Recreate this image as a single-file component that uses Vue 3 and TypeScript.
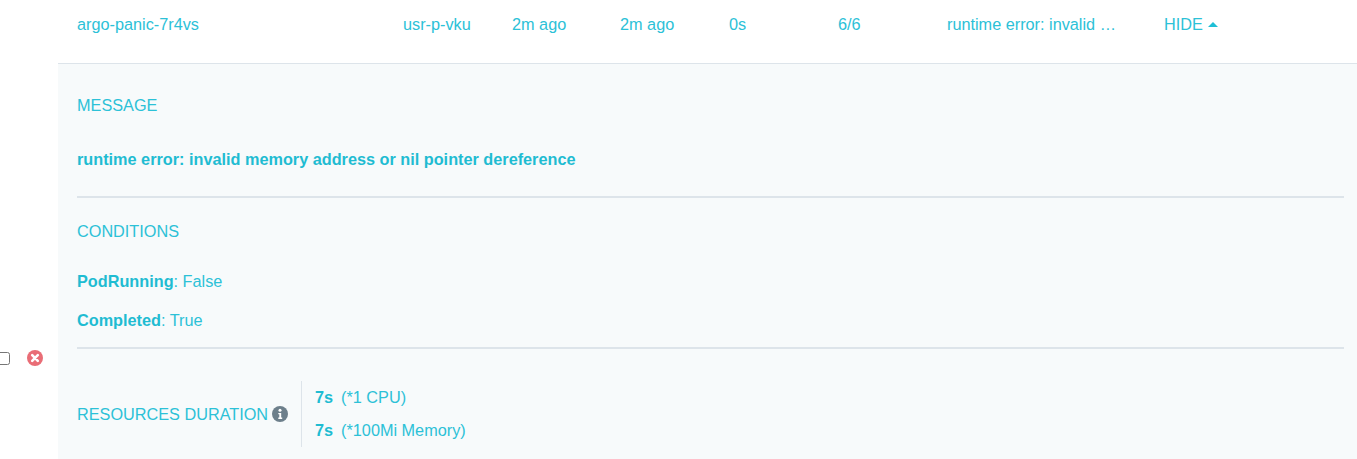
<script setup lang="ts">
const cells = ['usr-p-vku', '2m ago', '2m ago', '0s', '6/6']
const conditions = [
  { name: 'PodRunning', value: 'False' },
  { name: 'Completed', value: 'True' },
]
const durations = [
  { value: '7s', unit: '(*1 CPU)' },
  { value: '7s', unit: '(*100Mi Memory)' },
]
</script>

<template>
  <div class="page">
    <aside class="gutter">
      <span class="checkbox"></span>
      <svg class="status" viewBox="0 0 16 16" width="16" height="16">
        <circle cx="8" cy="8" r="8" fill="#e96d76" />
        <path d="M5.2 5.2l5.6 5.6M10.8 5.2l-5.6 5.6" stroke="#fff" stroke-width="2.6" stroke-linecap="round" />
      </svg>
    </aside>
    <main class="main">
      <div class="row">
        <div class="name">argo-panic-7r4vs</div>
        <div v-for="(cell, i) in cells" :key="i">{{ cell }}</div>
        <div class="ellipsis">runtime error: invalid memory address or nil pointer dereference</div>
        <div class="toggle">HIDE <span class="caret"></span></div>
      </div>
      <div class="details">
        <section class="message">
          <div class="title">MESSAGE</div>
          <div class="strong">runtime error: invalid memory address or nil pointer dereference</div>
        </section>
        <section class="conditions">
          <div class="title">CONDITIONS</div>
          <div v-for="c in conditions" :key="c.name" class="condition">
            <b class="strong">{{ c.name }}</b>: {{ c.value }}
          </div>
        </section>
        <section class="resources">
          <div class="res-label">
            RESOURCES DURATION
            <svg class="info" viewBox="0 0 16 16" width="16" height="16">
              <circle cx="8" cy="8" r="8" fill="#6d7f8b" />
              <circle cx="8" cy="4.3" r="1.5" fill="#fff" />
              <path d="M6.3 7h2.9v4.6h1v1.3H6.3v-1.3h1V8.3h-1z" fill="#fff" />
            </svg>
          </div>
          <div class="res-values">
            <div v-for="(d, i) in durations" :key="i" class="res-line">
              <b class="strong">{{ d.value }}</b>
              <span>{{ d.unit }}</span>
            </div>
          </div>
        </section>
      </div>
    </main>
  </div>
</template>

<style>
html,
body {
  margin: 0;
  background: #fff;
  overflow: hidden;
}
</style>

<style scoped>
.page {
  display: flex;
  width: 1357px;
  height: 459px;
  overflow: hidden;
  font-family: 'Liberation Sans', Arial, sans-serif;
  font-size: 16.25px;
  color: #2cc1d7;
}

.gutter {
  flex: 0 0 61px;
  display: flex;
  align-items: flex-start;
  gap: 17px;
  padding-top: 350px;
  margin-left: -3px;
  box-sizing: border-box;
}

.checkbox {
  flex: none;
  width: 13px;
  height: 13px;
  margin-top: 2px;
  border: 1px solid #767676;
  border-radius: 2.5px;
  box-sizing: border-box;
  background: #fff;
}

.status {
  flex: none;
}

.main {
  flex: 1;
  min-width: 0;
}

.row {
  display: grid;
  grid-template-columns: 326px 109px 108px 109px 109px 109px 217px auto;
  align-items: center;
  height: 64px;
  padding: 0 0 15px 19px;
  box-sizing: border-box;
  border-bottom: 1px solid #dde4ea;
}

.ellipsis {
  max-width: 170px;
  white-space: nowrap;
  overflow: hidden;
  text-overflow: ellipsis;
}

.toggle {
  white-space: nowrap;
}

.caret {
  display: inline-block;
  width: 0;
  height: 0;
  margin-left: 1px;
  vertical-align: 3px;
  border-left: 5px solid transparent;
  border-right: 5px solid transparent;
  border-bottom: 5px solid #1fbfd6;
}

.details {
  background: #f7fafb;
  height: 395px;
  padding: 0 13px 0 19px;
}

.title {
  line-height: 18px;
}

.strong {
  font-weight: 700;
  color: #1fbcd2;
}

.message {
  padding-top: 32px;
  height: 134px;
  box-sizing: border-box;
  border-bottom: 2px solid #dde4ea;
}

.message .title {
  margin-bottom: 36px;
}

.conditions {
  padding-top: 24px;
  height: 151px;
  box-sizing: border-box;
  border-bottom: 2px solid #dde4ea;
}

.conditions .title {
  margin-bottom: 32px;
}

.condition {
  line-height: 18px;
  margin-bottom: 21px;
}

.resources {
  display: flex;
  align-items: center;
  margin-top: 32px;
  height: 66px;
}

.res-label {
  display: flex;
  align-items: center;
  gap: 4px;
  width: 225px;
  height: 66px;
  border-right: 1px solid #dde4ea;
  box-sizing: border-box;
}

.res-values {
  padding-left: 13px;
}

.res-line {
  display: flex;
  gap: 8px;
  line-height: 33px;
}
</style>
